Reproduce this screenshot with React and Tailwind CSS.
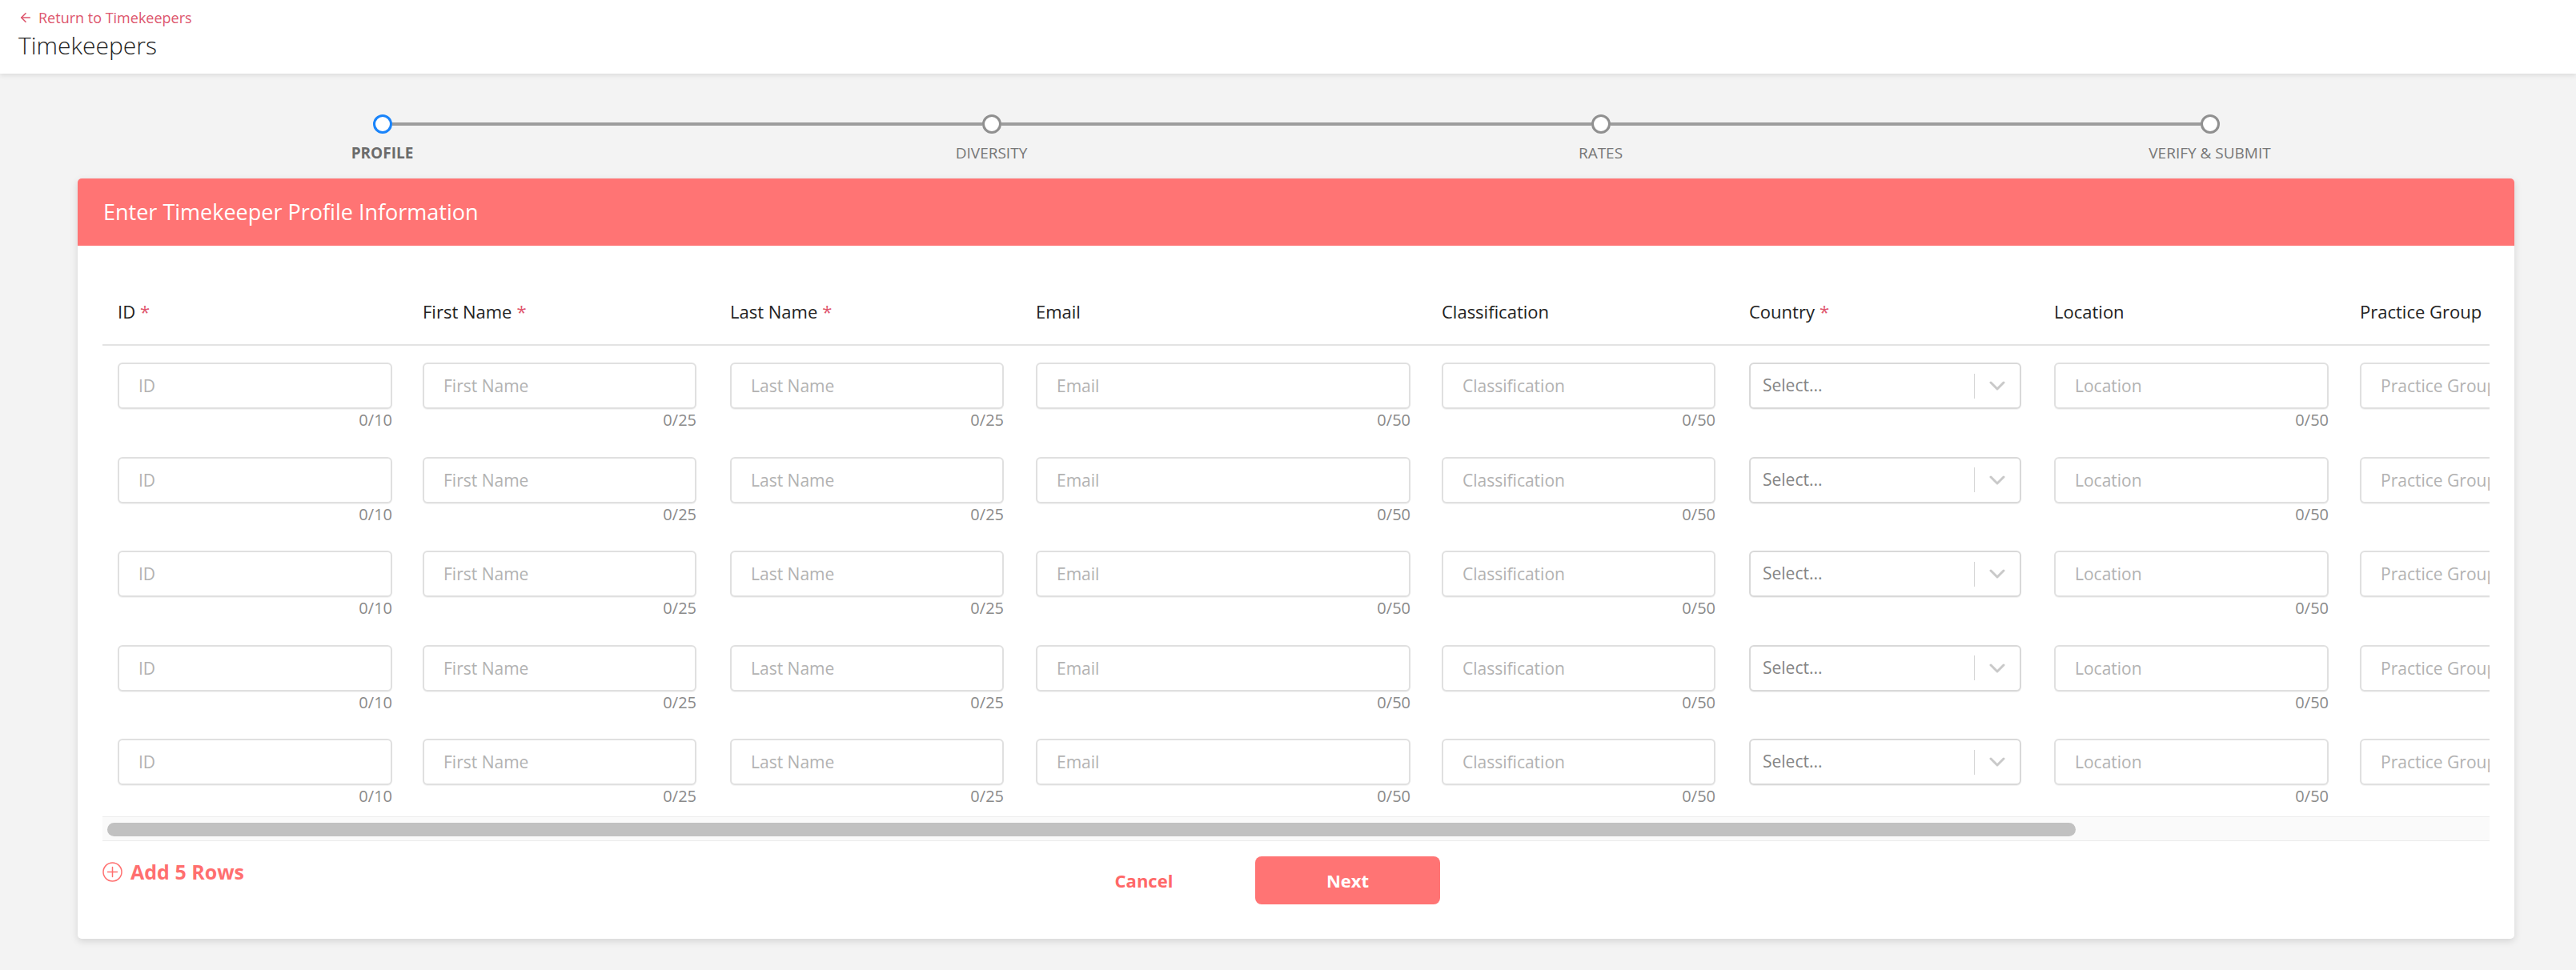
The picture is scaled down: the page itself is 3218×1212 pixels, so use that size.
import { ArrowLeft } from 'lucide-react'

const columns = [
  { key: 'id', label: 'ID', required: true, placeholder: 'ID', max: 10, width: 'w-[343px]', gap: 'mr-[38px]' },
  { key: 'first', label: 'First Name', required: true, placeholder: 'First Name', max: 25, width: 'w-[342px]', gap: 'mr-[42px]' },
  { key: 'last', label: 'Last Name', required: true, placeholder: 'Last Name', max: 25, width: 'w-[342px]', gap: 'mr-[40px]' },
  { key: 'email', label: 'Email', placeholder: 'Email', max: 50, width: 'w-[468px]', gap: 'mr-[39px]' },
  { key: 'class', label: 'Classification', placeholder: 'Classification', max: 50, width: 'w-[342px]', gap: 'mr-[42px]' },
  { key: 'country', label: 'Country', required: true, select: true, width: 'w-[340px]', gap: 'mr-[41px]' },
  { key: 'location', label: 'Location', placeholder: 'Location', max: 50, width: 'w-[343px]', gap: 'mr-[39px]' },
  { key: 'practice', label: 'Practice Group', placeholder: 'Practice Group', max: 50, width: 'w-[343px]', gap: 'mr-[39px]' },
  { key: 'office', label: 'Office', placeholder: 'Office', max: 50, width: 'w-[343px]', gap: 'mr-[39px]' },
]

const steps = ['PROFILE', 'DIVERSITY', 'RATES', 'VERIFY & SUBMIT']
const rows = [0, 1, 2, 3, 4]

function Stepper() {
  return (
    <div className="ml-[97px] mr-[77px] grid grid-cols-4 pt-[51px] pb-[19px]">
      {steps.map((step, index) => (
        <div key={step} className="flex flex-col items-center">
          <div className="flex w-full items-center">
            <div className={`h-[4px] flex-1 ${index === 0 ? '' : 'bg-[#9c9c9c]'}`} />
            <div
              className={`h-[24px] w-[24px] shrink-0 rounded-full border-[3px] bg-white ${
                index === 0 ? 'border-[#1a84fa]' : 'border-[#909090]'
              }`}
            />
            <div className={`h-[4px] flex-1 ${index === steps.length - 1 ? '' : 'bg-[#9c9c9c]'}`} />
          </div>
          <div
            className={`mt-[11px] text-[19px] leading-[26px] ${
              index === 0 ? 'font-bold text-[#6b6b6b]' : 'text-[#777]'
            }`}
          >
            {step}
          </div>
        </div>
      ))}
    </div>
  )
}

function Cell({ col }) {
  if (col.select) {
    return (
      <div className={`flex-none ${col.width} ${col.gap}`}>
        <div className="flex h-[58px] items-center rounded-[6px] border-2 border-[#d9d9d9] bg-white shadow-[0_1px_1px_rgba(0,0,0,0.06)]">
          <span className="flex-1 pl-[15px] text-[21px] text-[#858585]">Select...</span>
          <div className="h-[31px] w-px bg-[#d6d6d6]" />
          <div className="flex w-[56px] items-center justify-center">
            <svg width="20" height="12" viewBox="0 0 20 12" fill="none">
              <path d="M2 2l8 8 8-8" stroke="#c9c9c9" strokeWidth="3" strokeLinecap="round" strokeLinejoin="round" />
            </svg>
          </div>
        </div>
        <div className="h-[28px]" />
      </div>
    )
  }
  return (
    <div className={`flex-none ${col.width} ${col.gap}`}>
      <input
        readOnly
        placeholder={col.placeholder}
        className="block h-[58px] w-full rounded-[6px] border-2 border-[#e0e0e0] bg-white pl-[24px] text-[21px] outline-none placeholder:text-[#b2b2b2] shadow-[0_1px_1px_rgba(0,0,0,0.05)]"
      />
      <div className="text-right text-[20px] leading-[28px] text-[#8a8a8a]">0/{col.max}</div>
    </div>
  )
}

function AddIcon() {
  return (
    <svg width="25" height="25" viewBox="0 0 25 25" fill="none">
      <circle cx="12.5" cy="12.5" r="11.5" stroke="#ff7070" strokeWidth="1.5" />
      <path d="M12.5 6.5v12M6.5 12.5h12" stroke="#ff7070" strokeWidth="1.5" strokeLinecap="round" />
    </svg>
  )
}

export default function App() {
  return (
    <div className="min-h-screen bg-[#f3f3f3] font-['Open_Sans',sans-serif]">
      <header className="h-[92px] bg-white px-[23px] pt-[10px] shadow-[0_2px_6px_rgba(0,0,0,0.1)]">
        <div className="flex items-center gap-[7px] text-[18px] leading-[24px] text-[#dd566d]">
          <ArrowLeft size={18} strokeWidth={2.2} />
          <span>Return to Timekeepers</span>
        </div>
        <h1 className="mt-[3px] text-[30px] leading-[40px] font-light text-[#222]">Timekeepers</h1>
      </header>

      <Stepper />

      <div className="ml-[97px] mr-[77px] overflow-hidden rounded-[5px] bg-white shadow-[0_3px_10px_rgba(0,0,0,0.13)]">
        <div className="flex h-[84px] items-center bg-[#ff7474] px-[32px] text-[27px] text-white">
          Enter Timekeeper Profile Information
        </div>

        <div className="px-[31px] pb-[43px]">
          <div className="overflow-hidden">
            <div className="flex w-max border-b-2 border-[#e3e3e3] pt-[67px] pb-[26px] pl-[19px]">
              {columns.map((col) => (
                <div key={col.key} className={`flex-none ${col.width} ${col.gap} text-[22px] leading-[30px] text-[#222]`}>
                  {col.label}
                  {col.required && <span className="ml-[6px] text-[#e0566e]">*</span>}
                </div>
              ))}
            </div>
            <div className="pt-[21px] pl-[19px]">
              {rows.map((row) => (
                <div key={row} className="mb-[31.5px] flex w-max last:mb-[11px]">
                  {columns.map((col) => (
                    <Cell key={col.key} col={col} />
                  ))}
                </div>
              ))}
            </div>
          </div>

          <div className="h-[31px] border-y border-[#ececec] bg-[#fafafa] pt-[7px] pl-[6px]">
            <div className="h-[17px] w-[2459px] rounded-full bg-[#c1c1c1]" />
          </div>

          <div className="flex items-start pt-[19px]">
            <div className="mt-[4px] flex items-center gap-[10px] text-[25px] leading-[30px] font-bold text-[#ff6f6f]">
              <AddIcon />
              <span>Add 5 Rows</span>
            </div>
            <button className="ml-[1049px] h-[60px] w-[150px] text-[22px] font-bold text-[#ff6868]">Cancel</button>
            <button className="ml-[64px] h-[60px] w-[231px] rounded-[8px] bg-[#ff7474] text-[22px] font-bold text-white">
              Next
            </button>
          </div>
        </div>
      </div>
    </div>
  )
}
